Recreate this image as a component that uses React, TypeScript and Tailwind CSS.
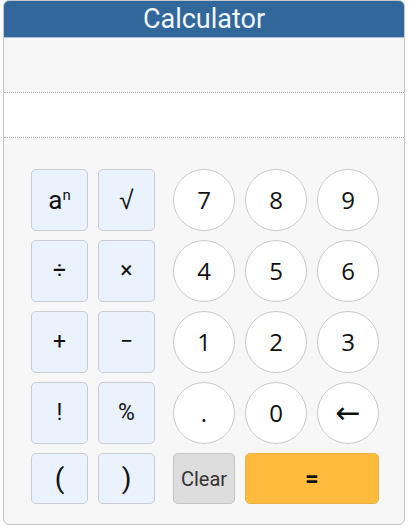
const LEFT_KEYS = [
  ["aⁿ", "√"],
  ["÷", "×"],
  ["+", "−"],
  ["!", "%"],
];

const NUM_KEYS = [
  ["7", "8", "9"],
  ["4", "5", "6"],
  ["1", "2", "3"],
  [".", "0", "←"],
];

function OpKey({ label }: { label: string }) {
  let content: React.ReactNode = label;
  if (label === "aⁿ") {
    content = (
      <span className="text-[26px]">
        a<sup className="text-[15px] -top-[0.6em]">n</sup>
      </span>
    );
  } else if (label === "√") {
    content = <span className="text-[26px] font-['Liberation_Sans',sans-serif]">√</span>;
  }
  return (
    <button className="w-[57px] h-[62px] rounded-[5px] border border-[#c9cdd3] bg-[#eaf2fe] text-[23px] text-[#111] flex items-center justify-center">
      {content}
    </button>
  );
}

export default function App() {
  return (
    <div className="w-[402px] ml-[3px] font-['Roboto','Liberation_Sans',sans-serif]">
      <div className="rounded-[6px] border border-[#c6c6c6] overflow-hidden bg-[#f7f7f7]">
        {/* Header */}
        <div className="h-[37px] bg-[#32679c] border-b border-[#a9c1d8] flex items-center justify-center">
          <h1 className="text-[27px] leading-none text-[#f2f8ff] pt-[1px]">Calculator</h1>
        </div>

        {/* Display */}
        <div className="h-[55px] bg-[#f7f7f7] border-b border-dotted border-[#aaa]" />
        <div className="h-[45px] bg-white border-b border-dotted border-[#aaa]" />

        {/* Keypad */}
        <div className="pt-[31px] pb-[20px] pl-[27px] flex gap-[18px]">
          <div className="grid grid-cols-2 gap-x-[10px] gap-y-[9px] w-[124px]">
            {LEFT_KEYS.flat().map((k) => (
              <OpKey key={k} label={k} />
            ))}
            <button className="w-[57px] h-[51px] rounded-[5px] border border-[#c9cdd3] bg-[#eaf2fe] text-[28px] text-[#111]">
              (
            </button>
            <button className="w-[57px] h-[51px] rounded-[5px] border border-[#c9cdd3] bg-[#eaf2fe] text-[28px] text-[#111]">
              )
            </button>
          </div>

          <div className="grid grid-cols-3 gap-x-[10px] gap-y-[9px] w-[206px]">
            {NUM_KEYS.flat().map((k) => (
              <button
                key={k}
                className="w-[62px] h-[62px] rounded-full border border-[#c9c9c9] bg-white text-[24px] text-[#111] flex items-center justify-center font-['Open_Sans','Noto_Sans',sans-serif]"
              >
                {k === "←" ? <span className="text-[30px] leading-none font-['DejaVu_Sans',sans-serif]">←</span> : k}
              </button>
            ))}
            <button className="w-[62px] h-[51px] rounded-[5px] border border-[#c4c4c4] bg-[#dddddd] text-[20px] text-[#333]">
              Clear
            </button>
            <button className="col-span-2 h-[51px] rounded-[5px] border border-[#e8b14a] bg-[#ffbb3e] text-[24px] font-bold text-[#111]">
              =
            </button>
          </div>
        </div>
      </div>
    </div>
  );
}
